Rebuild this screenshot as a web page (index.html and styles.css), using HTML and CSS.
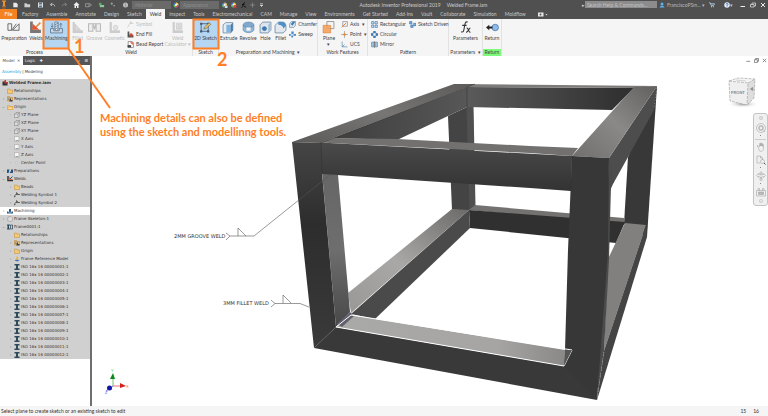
FILE: index.html
```
<!DOCTYPE html>
<html lang="en">
<head>
    <meta charset="UTF-8">
    <meta name="viewport" content="width=device-width, initial-scale=1.0">
    <title>Autodesk Inventor Professional 2019 - Welded Frame.iam</title>
    <link rel="stylesheet" href="styles.css">
</head>
<body>
    <!-- shared icons -->
    <svg class="sprite" aria-hidden="true">
        <symbol id="folder" viewBox="0 0 12 12"><path d="M1 2h4l1 2h5v7H1z" fill="#f3c978" stroke="#c58a2c"/></symbol>
        <symbol id="rep" viewBox="0 0 12 12"><path d="M1 1h4l1 2h5v7H1z" fill="#e9bd6c" stroke="#b07c2c"/><path d="M5 5h3v3h3v3H5z" fill="#444"/><path d="M3 4h3v3H3z" fill="#fff" stroke="#555"/></symbol>
        <symbol id="plane" viewBox="0 0 12 12"><path d="M1 4l3-3h7v7l-3 3H1zM1 4h7v7M8 4l3-3" fill="#ddd" stroke="#777"/></symbol>
        <symbol id="axis" viewBox="0 0 12 12"><path d="M1 1h9v10H1z" fill="#f5f5f5" stroke="#999"/><path d="M3 9h6" stroke="#555"/></symbol>
        <symbol id="beam" viewBox="0 0 12 12"><path d="M1 0h10v3H8v6h3v3H1V9h3V3H1z" fill="#2f4a5c"/></symbol>
        <symbol id="wsym" viewBox="0 0 12 12"><path d="M0 10l3-5h9M5 5V1l4 4M0 10l3-1" fill="none" stroke="#333" stroke-width="1.3"/></symbol>
        <symbol id="prep" viewBox="0 0 12 12"><path d="M0 3h5l-2 7H0zM12 3v7H5l3-4V3z" fill="#23527c"/></symbol>
        <symbol id="weld" viewBox="0 0 12 12"><path d="M2 0v9h10" fill="none" stroke="#333" stroke-width="3"/><path d="M3 8l1-6 7 6z" fill="#e8642c"/><path d="M11 1L6 6" stroke="#235a8c" stroke-width="2"/></symbol>
        <symbol id="mach" viewBox="0 0 12 12"><path d="M0 7h3v2h6V7h3v4H0zM4 2h4v5L6 9 4 7z" fill="#2b5a80"/></symbol>
        <symbol id="wheel" viewBox="0 0 12 12"><circle cx="6" cy="6" r="5" fill="#4b82e0"/><path d="M6 6L6 1a5 5 0 0 1 5 5z" fill="#f2d33d"/><path d="M6 6h5a5 5 0 0 1-5 5z" fill="#e24b4b"/><path d="M6 6v5a5 5 0 0 1-5-5z" fill="#58b957"/><circle cx="6" cy="6" r="2" fill="#fff"/></symbol>
        <symbol id="open" viewBox="0 0 12 12"><path d="M1 3h4l1 2h5v6H1z" fill="#f6d28c" stroke="#d8921e"/><path d="M3 6h9l-2 5H1z" fill="#ffe4a8" stroke="#d8921e"/></symbol>
    </svg>

    <header class="titlebar">
        <nav class="quick">
            <svg class="logo" viewBox="0 0 12 18"><path d="M2 1h8v2L8 4v7l2 1v1H2v-1l2-1V4L2 3z" fill="#f0902c"/><path d="M2 15h8v2H2z" fill="#a8662c"/></svg>
            <svg viewBox="0 0 16 12"><path d="M3 1h7l3 3v7H3z" fill="#e8e8e8"/></svg>
            <svg viewBox="0 0 16 12"><path d="M1 2h5l1 2h7v7H1z" fill="#cfcfcf"/></svg>
            <svg viewBox="0 0 12 12"><path d="M1 1h10v10H1z" fill="#ddd"/><path d="M3 1h6v4H3zM3 7h6v4H3z" fill="#5a7896"/></svg>
            <svg viewBox="0 0 16 12"><path d="M13 9c0-4-4-6-9-4M7 1L3 5l4 3" fill="none" stroke="#c8c8c8" stroke-width="2"/></svg>
            <svg viewBox="0 0 16 12"><path d="M3 9c0-4 4-6 9-4M9 1l4 4-4 3" fill="none" stroke="#888" stroke-width="2"/></svg>
            <svg viewBox="0 0 12 12"><path d="M6 0l6 6h-2v6H7V8H5v4H2V6H0z" fill="#eee"/></svg>
            <svg viewBox="0 0 16 12"><path d="M1 3h8v7H1zM9 2l6 4-6 4" fill="none" stroke="#999" stroke-width="2"/></svg>
            <svg viewBox="0 0 16 12"><path d="M2 1h6v5H2z" fill="#5aa86a"/><path d="M4 6h10v5H4z" fill="#8fc79a"/></svg>
            <svg viewBox="0 0 16 12"><path d="M2 1h4v4H2zM8 6h3v3H8z" fill="#aaa"/></svg>
            <svg viewBox="0 0 12 12"><circle cx="6" cy="6" r="5" fill="#c8c8c8"/><path d="M2 4h8M2 8h8M6 1v10" stroke="#888"/></svg>
        </nav>
        <select class="combo" aria-label="Material"><option>Material</option></select>
        <svg class="mini" viewBox="0 0 12 12"><use href="#wheel"/></svg>
        <select class="combo" aria-label="Appearance"><option>Appearance</option></select>
        <nav class="quick tail">
            <svg viewBox="0 0 12 12"><use href="#wheel"/><path d="M7 7h5v5H7z" fill="#cde"/></svg>
            <svg viewBox="0 0 12 12"><use href="#wheel"/><path d="M6 6l6 6m0-6l-6 6" stroke="#e03c3c" stroke-width="2"/></svg>
            <svg viewBox="0 0 12 12"><path d="M9 1C5 0 6 11 2 11M3 5h5M7 8l4 3" fill="none" stroke="#111" stroke-width="2"/></svg>
            <svg viewBox="0 0 12 12"><path d="M6 1v10M1 6h10" stroke="#aaa"/></svg>
            <svg viewBox="0 0 12 12"><path d="M3 3h6M3 6h6L6 9z" fill="#ddd" stroke="#ddd"/></svg>
        </nav>
        <div class="title"><span>Autodesk Inventor Professional 2019</span><span>Welded Frame.iam</span></div>
        <div class="account">
            <span class="arrow">▸</span>
            <input class="search" type="text" placeholder="Search Help &amp; Commands..." aria-label="Search Help and Commands">
            <svg class="mini" viewBox="0 0 12 12"><circle cx="6" cy="4" r="3" fill="#5db0f0"/><path d="M1 11c1-5 9-5 10 0z" fill="#5db0f0"/></svg>
            <span class="user">FranciscoPSm... ▾</span>
            <svg class="mini cart" viewBox="0 0 14 12"><path d="M0 1h3l2 6h6l2-4H4" fill="none" stroke="#e8e8e8" stroke-width="1.5"/><path d="M5 3h7l-1 3H6z" fill="#4a90d0"/><path d="M5 9h2v2H5zM9 9h2v2H9z" fill="#eee"/></svg>
            <svg class="mini" viewBox="0 0 12 12"><circle cx="6" cy="6" r="5.5" fill="#e8eef8"/><path d="M4 5c0-3 4-3 4 0 0 1-2 1-2 3M6 9v1" fill="none" stroke="#24549c" stroke-width="1.5"/></svg>
            <span class="arrow">▾</span>
        </div>
        <div class="winbtns">
            <button aria-label="Minimize"><svg viewBox="0 0 12 12"><path d="M1 9h9" stroke="#eee" stroke-width="2"/></svg></button>
            <button aria-label="Restore"><svg viewBox="0 0 12 12"><path d="M1 5h7v5H1zM4 5V2h7v6H8" fill="none" stroke="#ddd" stroke-width="1.5"/></svg></button>
            <button aria-label="Close"><svg viewBox="0 0 12 12"><path d="M2 2l8 8m0-8l-8 8" stroke="#eee" stroke-width="2"/></svg></button>
        </div>
    </header>

    <nav class="tabs">
        <button class="file">File</button>
        <button>Factory</button>
        <button>Assemble</button>
        <button>Annotate</button>
        <button>Design</button>
        <button>Sketch</button>
        <button class="active">Weld</button>
        <button>Inspect</button>
        <button>Tools</button>
        <button>Electromechanical</button>
        <button>CAM</button>
        <button>Manage</button>
        <button>View</button>
        <button>Environments</button>
        <button>Get Started</button>
        <button>Add-Ins</button>
        <button>Vault</button>
        <button>Collaborate</button>
        <button>Simulation</button>
        <button>Moldflow</button>
        <button class="display" aria-label="Ribbon display"><svg viewBox="0 0 20 10"><path d="M0 1h11v8H0z" fill="#e8e8e8"/><circle cx="5" cy="5" r="2" fill="#555"/><path d="M15 4h4l-2 3z" fill="#ddd"/></svg></button>
    </nav>

    <section class="ribbon">
        <div class="group process">
            <div class="items">
                <button class="tool"><svg viewBox="0 0 28 24"><path d="M2 4h8v14H2zM26 4v14H12z M10 18l10-14" fill="#f2f2f2" stroke="#666" stroke-width="2"/></svg>Preparation</button>
                <button class="tool"><svg viewBox="0 0 24 24"><path d="M2 1h5v15h15v6H2z" fill="#777"/><path d="M6 16L7 5l12 11z" fill="#e8542c"/><path d="M21 3l-8 8" stroke="#d69044" stroke-width="3"/></svg>Welds</button>
                <button class="tool on"><svg viewBox="0 0 24 24"><path d="M1 14h6v4h10v-4h6v8H1z" fill="#cdd8e2" stroke="#59728a" stroke-width="1.5"/><path d="M9 2h6v13l-3 3-3-3zM9 7l6-3M9 11l6-3M9 15l6-3M4 4v7m-2-2l2 3 2-3M20 12V5m-2 2l2-3 2 3" fill="#eef3f7" stroke="#59728a" stroke-width="1.5"/></svg>Machining</button>
            </div>
            <div class="label">Process</div>
        </div>
        <div class="group weldgrp">
            <div class="items">
                <button class="tool" disabled><svg viewBox="0 0 24 24"><path d="M3 2h4v15h15v5H3z" fill="#ccc"/><path d="M8 6l9 10H8z" fill="#ddd" stroke="#bbb"/></svg>Fillet</button>
                <button class="tool" disabled><svg viewBox="0 0 24 24"><path d="M1 5h8v14H1zM15 5h8v14h-8zM9 5h6l-3 9z" fill="#eee" stroke="#bbb" stroke-width="2"/></svg>Groove</button>
                <button class="tool" disabled><svg viewBox="0 0 24 24"><path d="M3 2h4v15h15v5H3z" fill="#ccc"/><circle cx="14" cy="12" r="4" fill="#e5e5e5" stroke="#bbb"/></svg>Cosmetic</button>
                <div class="stack">
                    <button disabled><svg viewBox="0 0 12 12"><path d="M1 11l4-7h6M6 4V1l3 3" fill="none" stroke="#bbb"/></svg>Symbol</button>
                    <button><svg viewBox="0 0 12 12"><path d="M1 1h3v6h7v4H1z" fill="#555"/><circle cx="7" cy="7" r="3" fill="#c44a3c"/></svg>End Fill</button>
                    <button><svg viewBox="0 0 12 12"><path d="M2 1h7l2 2v8H2z" fill="#fff" stroke="#555"/><path d="M1 7h6v4H1z" fill="#444"/><path d="M5 2h5v5z" fill="#e0523c"/></svg>Bead Report</button>
                </div>
                <button class="tool" disabled><svg viewBox="0 0 24 24"><path d="M3 2h4v15h15v5H3z" fill="#ccc"/><path d="M10 4h10v11H10zM12 7h6M12 10h6M12 13h6" fill="#e5e5e5" stroke="#bbb"/></svg>Weld<br>Calculator ▾</button>
            </div>
            <div class="label">Weld</div>
        </div>
        <div class="group sketchgrp">
            <div class="items">
                <button class="tool on"><svg viewBox="0 0 24 24"><path d="M4 5h13v14H4z" fill="none" stroke="#41586c" stroke-width="1.5"/><path d="M2 3h4v4H2zM15 3h4v4h-4zM2 17h4v4H2zM15 17h4v4h-4z" fill="#41586c"/><path d="M9 15l1-4 9-8 3 3-9 8z" fill="#f0c060" stroke="#555"/></svg>2D Sketch</button>
            </div>
            <div class="label">Sketch</div>
        </div>
        <div class="group prepgrp">
            <div class="items">
                <button class="tool"><svg viewBox="0 0 24 24"><path d="M2 7l5-4h13v14l-4 5H2z" fill="#e8edf2" stroke="#6a88a4" stroke-width="1.5"/><path d="M8 7h8v14H8z" fill="#7fb4e2"/><path d="M16 7l4-4v14l-4 5z" fill="#4c7da8"/></svg>Extrude</button>
                <button class="tool"><svg viewBox="0 0 24 24"><ellipse cx="12" cy="7" rx="10" ry="5" fill="#7fa9cf" stroke="#55799a"/><path d="M2 8v9c4 6 16 6 20 0V8l-6 4v5H8v-5z" fill="#8eb9df" stroke="#55799a"/><path d="M8 12h8v6H8z" fill="#f5f5f5"/></svg>Revolve</button>
                <button class="tool"><svg viewBox="0 0 24 24"><path d="M2 7l5-5h15v15l-5 5H2z" fill="#dde5ec" stroke="#6a88a4" stroke-width="1.5"/><path d="M17 7l5-5v15l-5 5z" fill="#a9bfd2"/><circle cx="10" cy="14" r="5" fill="#3e78b0" stroke="#fff"/></svg>Hole</button>
                <button class="tool"><svg viewBox="0 0 24 24"><path d="M2 22V8l6-6h7c5 0 7 4 7 7v8l-5 5z" fill="#e2e8ee" stroke="#6a88a4" stroke-width="1.5"/><path d="M8 2h7c5 0 7 4 7 7l-5 5c0-5-4-7-9-7z" fill="#4f8fc8"/></svg>Fillet</button>
                <div class="stack">
                    <button><svg viewBox="0 0 12 12"><path d="M1 5l3-4h7v7l-3 3H1z" fill="#dfe7ee" stroke="#55799a"/><path d="M3 5l4-4h4L6 8z" fill="#3d7db8"/></svg>Chamfer</button>
                    <button><svg viewBox="0 0 12 12"><path d="M4 1h4v4h4v3H7v3H4V8H0V5h4z" fill="#4a88c0"/><path d="M3 5h5v3H3z" fill="#cfe0ee"/></svg>Sweep</button>
                </div>
            </div>
            <div class="label">Preparation and Machining &nbsp;▾</div>
        </div>
        <div class="group workgrp">
            <div class="items">
                <button class="tool"><svg viewBox="0 0 24 24"><path d="M9 1h13v13H9z" fill="#f5f5f5" stroke="#8a8a8a" stroke-width="1.5"/><path d="M2 8h14v14H2z" fill="#f3a25c" fill-opacity=".9" stroke="#d87a2c"/></svg>Plane<i>▾</i></button>
                <div class="stack">
                    <button><svg viewBox="0 0 12 12"><path d="M3 1h8v8H3z" fill="none" stroke="#777"/><path d="M1 11L9 3" stroke="#e07a2c" stroke-width="1.5"/></svg>Axis &nbsp;▾</button>
                    <button><svg viewBox="0 0 12 12"><path d="M6 0v12M0 6h12" stroke="#888"/><path d="M6 3l3 3-3 3-3-3z" fill="#e88a3c"/></svg>Point &nbsp;▾</button>
                    <button><svg viewBox="0 0 12 12"><path d="M2 1v9h9M2 10l4-4" fill="none" stroke="#3a6ea0"/></svg>UCS</button>
                </div>
            </div>
            <div class="label">Work Features</div>
        </div>
        <div class="group patterngrp">
            <div class="items">
                <div class="stack">
                    <button><svg viewBox="0 0 12 12"><path d="M1 1h4v4H1zM7 1h4v4H7zM1 7h4v4H1zM7 7h4v4H7z" fill="#cfe0f0" stroke="#2f6aa5"/></svg>Rectangular</button>
                    <button><svg viewBox="0 0 12 12"><circle cx="6" cy="6" r="4" fill="none" stroke="#888"/><path d="M4 0h4v4H4zM4 8h4v4H4zM0 4h4v4H0zM8 4h4v4H8z" fill="#3c78b4"/></svg>Circular</button>
                    <button><svg viewBox="0 0 12 12"><path d="M1 2h4v8H1zM7 2h4v8H7z" fill="#a9c8e4" stroke="#41769f"/><path d="M6 0v12" stroke="#555"/></svg>Mirror</button>
                </div>
                <div class="stack">
                    <button><svg viewBox="0 0 12 12"><path d="M1 1h4v4H1zM3 7h4v4H3zM8 4h4v4H8z" fill="#7fb0de" stroke="#2f6aa5"/></svg>Sketch Driven</button>
                </div>
            </div>
            <div class="label">Pattern</div>
        </div>
        <div class="group paramgrp">
            <div class="items">
                <button class="tool"><svg viewBox="0 0 24 24"><path d="M16 2c-5-2-5 4-6 9s-1 11-6 9M6 8h8M14 13c4-1 3 8 7 8M21 13c-3 0-4 8-8 8" fill="none" stroke="#333" stroke-width="2"/></svg>Parameters</button>
            </div>
            <div class="label">Parameters &nbsp;▾</div>
        </div>
        <div class="group returngrp">
            <div class="items">
                <button class="tool"><svg viewBox="0 0 24 24"><circle cx="17" cy="12" r="6" fill="#8fbbe6" stroke="#4c7db0" stroke-width="1.5"/><path d="M0 12l6-5v3h6v4H6v3z" fill="#222"/></svg>Return</button>
            </div>
            <div class="label">Return</div>
        </div>
    </section>

    <main>
        <aside class="browser">
            <div class="panel-tabs">
                <button class="current">Model &nbsp;✕</button>
                <button>Logic</button>
                <button aria-label="Add panel">✚</button>
                <button class="menu" aria-label="Search">⌕</button>
                <button aria-label="Menu">☰</button>
            </div>
            <div class="modes"><a href="#">Assembly</a><a href="#">Modeling</a></div>
            <ul class="tree">
                <li class="root"><svg viewBox="0 0 12 12"><path d="M1 3h5v3h5v5H1z" fill="#333"/><path d="M5 0h3v4h4v3H5z" fill="#c8342c"/></svg><b>Welded Frame.iam</b></li>
                <li class="l1"><i></i><svg><use href="#folder"/></svg>Relationships</li>
                <li class="l1"><i>›</i><svg><use href="#rep"/></svg>Representations</li>
                <li class="l1"><i>⌄</i><svg><use href="#open"/></svg>Origin</li>
                <li class="l2"><i>-</i><svg><use href="#plane"/></svg>YZ Plane</li>
                <li class="l2"><i>-</i><svg><use href="#plane"/></svg>XZ Plane</li>
                <li class="l2"><i>-</i><svg><use href="#plane"/></svg>XY Plane</li>
                <li class="l2"><i>-</i><svg><use href="#axis"/></svg>X Axis</li>
                <li class="l2"><i>-</i><svg><use href="#axis"/></svg>Y Axis</li>
                <li class="l2"><i>-</i><svg><use href="#axis"/></svg>Z Axis</li>
                <li class="l2"><i>-</i><svg viewBox="0 0 12 12"><circle cx="5" cy="6" r="2" fill="#eee" stroke="#aaa"/></svg>Center Point</li>
                <li class="l1"><i>›</i><svg><use href="#prep"/></svg>Preparations</li>
                <li class="l1"><i>⌄</i><svg><use href="#weld"/></svg>Welds</li>
                <li class="l2"><i>›</i><svg><use href="#folder"/></svg>Beads</li>
                <li class="l2"><i>›</i><svg><use href="#wsym"/></svg>Welding Symbol 1</li>
                <li class="l2"><i>›</i><svg><use href="#wsym"/></svg>Welding Symbol 2</li>
                <li class="l1 selected"><i>›</i><svg><use href="#mach"/></svg>Machining</li>
                <li class="l1"><i>›</i><svg viewBox="0 0 12 12"><path d="M2 2l6-1 3 3v5l-4 2-6-2z" fill="#ddd" stroke="#888"/></svg>Frame Skeleton:1</li>
                <li class="l1"><i>⌄</i><svg viewBox="0 0 12 12"><path d="M0 1h6v2H4v6h2v2H0V9h1V3H0z" fill="#2f4a5c"/><path d="M7 2h4v8H7z" fill="none" stroke="#2f4a5c" stroke-width="1.5"/></svg>Frame0001:1</li>
                <li class="l2"><i></i><svg><use href="#folder"/></svg>Relationships</li>
                <li class="l2"><i>›</i><svg><use href="#rep"/></svg>Representations</li>
                <li class="l2"><i>›</i><svg><use href="#folder"/></svg>Origin</li>
                <li class="l2"><i>›</i><svg viewBox="0 0 12 12"><path d="M1 9l4-2 6 1-4 3z" fill="#3c78b4"/><path d="M2 8l3-3V1l4 1-2 5z" fill="#e8b02c"/></svg>Frame Reference Model</li>
                <li class="l2"><i>›</i><svg><use href="#beam"/></svg>ISO 16x 16 00000001:1</li>
                <li class="l2"><i>›</i><svg><use href="#beam"/></svg>ISO 16x 16 00000002:1</li>
                <li class="l2"><i>›</i><svg><use href="#beam"/></svg>ISO 16x 16 00000003:1</li>
                <li class="l2"><i>›</i><svg><use href="#beam"/></svg>ISO 16x 16 00000004:1</li>
                <li class="l2"><i>›</i><svg><use href="#beam"/></svg>ISO 16x 16 00000005:1</li>
                <li class="l2"><i>›</i><svg><use href="#beam"/></svg>ISO 16x 16 00000006:1</li>
                <li class="l2"><i>›</i><svg><use href="#beam"/></svg>ISO 16x 16 00000007:1</li>
                <li class="l2"><i>›</i><svg><use href="#beam"/></svg>ISO 16x 16 00000008:1</li>
                <li class="l2"><i>›</i><svg><use href="#beam"/></svg>ISO 16x 16 00000009:1</li>
                <li class="l2"><i>›</i><svg><use href="#beam"/></svg>ISO 16x 16 00000010:1</li>
                <li class="l2"><i>›</i><svg><use href="#beam"/></svg>ISO 16x 16 00000011:1</li>
                <li class="l2"><i>›</i><svg><use href="#beam"/></svg>ISO 16x 16 00000012:1</li>
            </ul>
        </aside>

        <section class="viewport">
            <svg class="scene" viewBox="92 56 676 350" preserveAspectRatio="xMinYMin meet">
                <defs>
                    <linearGradient id="front" x1="0" y1="0" x2="0" y2="1"><stop offset="0" stop-color="#4a4a4a"/><stop offset="1" stop-color="#333"/></linearGradient>
                    <linearGradient id="post" x1="0" y1="0" x2="0" y2="1"><stop offset="0" stop-color="#454545"/><stop offset=".4" stop-color="#2d2d2d"/><stop offset="1" stop-color="#3a3a3a"/></linearGradient>
                    <linearGradient id="side" x1="0" y1="0" x2="0" y2="1"><stop offset="0" stop-color="#666"/><stop offset=".5" stop-color="#6e6e6e"/><stop offset="1" stop-color="#484848"/></linearGradient>
                    <linearGradient id="topface" x1="0" y1="1" x2="1" y2="0"><stop offset="0" stop-color="#5c5b5a"/><stop offset=".5" stop-color="#787674"/><stop offset="1" stop-color="#5c5b5a"/></linearGradient>
                    <linearGradient id="righttop" x1="0" y1="1" x2="1" y2="0"><stop offset="0" stop-color="#716f6e"/><stop offset=".5" stop-color="#8b8988"/><stop offset="1" stop-color="#62605f"/></linearGradient>
                    <linearGradient id="inner" x1="0" y1="0" x2="1" y2="0"><stop offset="0" stop-color="#3e3e3e"/><stop offset="1" stop-color="#575757"/></linearGradient>
                    <linearGradient id="back" x1="0" y1="0" x2="1" y2="0"><stop offset="0" stop-color="#5a5a5a"/><stop offset="1" stop-color="#2e2e2e"/></linearGradient>
                    <linearGradient id="floor" x1="0" y1="1" x2="1" y2="0"><stop offset="0" stop-color="#9a9897"/><stop offset=".45" stop-color="#a9a8a7"/><stop offset="1" stop-color="#6c6a69"/></linearGradient>
                    <linearGradient id="sill" x1="0" y1="0" x2="1" y2="0"><stop offset="0" stop-color="#a9a9a8"/><stop offset=".7" stop-color="#a6a5a4"/><stop offset="1" stop-color="#8a8988"/></linearGradient>
                    <radialGradient id="shadow"><stop offset="0" stop-color="#999"/><stop offset="1" stop-color="#fff" stop-opacity="0"/></radialGradient>
                </defs>
                <!-- back posts and rails -->
                <path d="M448 116l19-9h6l2 99-6 4h-17z" fill="#444"/>
                <path d="M466.500 107h7l2 99-6 4z" fill="#505050"/>
                <path d="M467 87l167 1-22 22-145-3z" fill="url(#back)"/>
                <path d="M454 84l203 2-23 2-167-1z" fill="#7d7b7a"/>
                <path d="M475 205l149 13v7l-155-15z" fill="#747271"/>
                <path d="M469 210l156 12-9 21-146-15z" fill="#303030"/>
                <path d="M628 157l29-71-10 151-23-13z" fill="#383838"/>
                <!-- bottom side rails -->
                <path d="M452 209l17 1-118 103-3-20z" fill="url(#floor)"/>
                <path d="M469 210l1 18-95 91-24-5z" fill="#4a4a4a"/>
                <path d="M625 223l21 2-42 126 4-92z" fill="#81807e"/>
                <path d="M646 225l1 12-50 163 7-49z" fill="#444"/>
                <!-- top rails -->
                <path d="M333 138l134-51v20l-19 9-51 24z" fill="url(#inner)"/>
                <path d="M292 142l162-58h21l-8 3-134 51-12 5z" fill="url(#topface)"/>
                <path d="M320 142.500l13-4.500 64 1 133 7 48 2-6 8-42-3z" fill="#73716f"/>
                <path d="M609 158l48-72-3 24-26 47-15 27-4 9z" fill="#4d4d4d"/>
                <path d="M572 156l62-69 23-1-48 72z" fill="url(#righttop)"/>
                <path d="M657 88l-3 20" stroke="#aaa" stroke-dasharray="1 2" stroke-width=".6"/>
                <!-- front frame -->
                <path d="M322 172l16 3 12 137-14 15z" fill="url(#side)"/>
                <path d="M320 142.500l252 13.500-1 35-41-3-208-14z" fill="url(#front)"/>
                <path d="M292 142l30 1v30l14 154-22 21z" fill="url(#post)"/>
                <path d="M609 158l5 24-3 3-2 75-5 91-7 49z" fill="#4b4b4b"/>
                <path d="M314 348l22-21 229 39 7-16 25 50z" fill="#393939"/>
                <path d="M572 156l37 2-1 92-11 150-33-34 1-16 3-100z" fill="#373737"/>
                <path d="M336 327l15-12 214 35-1 16z" fill="url(#sill)"/>
                <path d="M337 324l13-12 4 4-12 11z" fill="#62606c"/>
                <path d="M336 327l15-12 221 35-8 16z" fill="none" stroke="#fff"/>
                <path d="M565 350l-1 16 8-16z" fill="#555"/>
                <path d="M604 352l-7 45" stroke="#aaa" stroke-dasharray="1 2" stroke-width=".6"/>
                <path d="M321 143l1 29M572 156l-1 35M467 87v20M321 143l146-56 8-3" fill="none" stroke="#333" stroke-width=".5"/>

                <!-- weld symbols -->
                <g fill="none" stroke="#555" stroke-width=".6">
                    <path d="M226 233l4 3-4 4M230 236h24l76-61M238 236v-8l8 8"/>
                    <path d="M271 300l4 3.500-4 3.500M275 303.500h25l9 3.500M283 303v-8l8 8"/>
                </g>
                <text class="weld-note" x="174" y="238">2MM GROOVE WELD</text>
                <text class="weld-note" x="223" y="305">3MM FILLET WELD</text>

                <!-- axis triad -->
                <g stroke-width=".7">
                    <path d="M113 386v-8" stroke="#3a3"/><path d="M113 373l2 6h-5z" fill="#0a8a1a"/>
                    <path d="M113 386h8" stroke="#d33"/><path d="M126 386l-6 2v-5z" fill="#d02020"/>
                    <path d="M113 386l-7 5" stroke="#33c"/><circle cx="109.500" cy="388" r="2.500" fill="#1414a8"/>
                </g>
                <g class="triad"><text x="111" y="372" fill="#2fd22f">Y</text><text x="126" y="388" fill="#ff4a3c">X</text><text x="105" y="394" fill="#3c3cff">Z</text></g>
            </svg>

            <div class="doc-buttons">
                <button aria-label="Minimize document"><svg viewBox="0 0 12 12"><path d="M1 8h9" stroke="#777" stroke-width="2"/></svg></button>
                <button aria-label="Restore document"><svg viewBox="0 0 12 12"><path d="M1 4h7v7H1zM4 4V1h7v7H8" fill="none" stroke="#777" stroke-width="2"/></svg></button>
                <button aria-label="Close document"><svg viewBox="0 0 12 12"><path d="M2 2l8 8m0-8l-8 8" stroke="#777" stroke-width="2"/></svg></button>
            </div>
            <svg class="cube" viewBox="0 0 34 32">
                <ellipse cx="17" cy="27" rx="16" ry="4" fill="url(#shadow)"/>
                <path d="M3 4l9-3 17 1-7 4z" fill="#f6f6f6"/><path d="M3 4l19 2-1 22-17-4z" fill="#efefef"/><path d="M22 6l7-4-1 19-7 7z" fill="#dedede"/>
                <path d="M3 4l9-3 17 1-1 19-7 7-17-4zM3 4l19 2-1 22M22 6l7-4" fill="none" stroke="#999" stroke-width=".6" stroke-dasharray="3 1"/>
                <path d="M10 3l10 1M24 12l3-2v4z" fill="#888" stroke="#aaa" stroke-width=".5"/>
                <text x="5" y="17">FRONT</text>
            </svg>
            <nav class="navbar">
                <svg class="tiny" viewBox="0 0 12 12"><circle cx="6" cy="6" r="5"/><path d="M4 4l4 4m0-4l-4 4"/></svg>
                <button aria-label="Wheel"><svg viewBox="0 0 20 20"><circle cx="10" cy="10" r="9"/><circle cx="10" cy="10" r="5"/><path d="M7 7h6v6H7zM15 15l3 3"/></svg></button>
                <i></i>
                <hr>
                <button aria-label="Pan"><svg viewBox="0 0 20 20"><path d="M5 11L2 8l2-1 3 3V4c0-2 2-2 2 0v4-5c0-2 2-2 2 0v5-4c0-2 2-2 2 0v5-3c0-2 2-2 2 0v7c0 7-8 7-9 3z"/></svg></button>
                <button aria-label="Zoom"><svg viewBox="0 0 20 20"><path d="M2 2h7l4 4v4M2 2v14h7M9 2v4h4"/><circle cx="13" cy="13" r="4"/><path d="M16 16l3 3" stroke="#555" stroke-width="2"/></svg></button>
                <i></i>
                <button aria-label="Orbit"><svg viewBox="0 0 20 20"><path d="M10 1l3 4h-2v3l4-1V5l4 4-4 4v-2l-4 1v4h2l-3 4-3-4h2v-4l-4-1v2L1 9l4-4v2l4 1V5H7z"/></svg></button>
                <i></i>
                <button aria-label="Look at"><svg viewBox="0 0 20 20"><path d="M1 7h18v11H1zM4 7V3h3v4M13 7V3h3v4"/><path d="M5 10h10v5H5z" fill="#bbb"/></svg></button>
                <svg class="tiny" viewBox="0 0 12 12"><circle cx="6" cy="6" r="5"/><path d="M4 5l2 3 2-3"/></svg>
            </nav>
        </section>
    </main>

    <footer class="status">
        <span class="prompt">Select plane to create sketch or an existing sketch to edit</span>
        <span>15</span>
        <span>16</span>
    </footer>

    <!-- tutorial callouts drawn over the window -->
    <svg class="callouts" width="300" height="150">
        <path d="M43.500 19.500h25v29h-25zM193.500 19.500h25v29h-25z"/>
        <path d="M68 48l42 60"/>
        <text class="step" x="74" y="53">1</text>
        <text class="step" x="217" y="66">2</text>
        <text class="note" x="100" y="122">Machining details can also be defined</text>
        <text class="note" x="100" y="136">using the sketch and modellinng tools.</text>
    </svg>
</body>
</html>
```
FILE: styles.css
```
:root {
    --chrome: #505050;
    --ribbon: #f5f5f5;
    --accent: #ff7f27;
    --text: #444;
}

* {
    box-sizing: border-box;
    margin: 0;
    padding: 0;
}

body {
    display: flex;
    flex-direction: column;
    min-height: 100vh;
    position: relative;
    font-family: Lato, "Liberation Sans", sans-serif;
    font-size: 5px;
    line-height: 6px;
    color: var(--text);
    background: #fff;
}

button,
input,
select {
    font: inherit;
    color: inherit;
    background: none;
    border: 0;
}

.sprite {
    position: absolute;
    width: 0;
    height: 0;
}

/* Title bar */
.titlebar {
    display: flex;
    align-items: center;
    height: 9px;
    background: var(--chrome);
    color: #ccc;
}

.quick {
    display: flex;
    align-items: center;
    justify-content: space-between;
    width: 129px;
    padding-left: 1px;
}

.quick svg {
    width: 7px;
    height: 6px;
}

.quick .logo {
    width: 6px;
    height: 9px;
}

.quick.tail {
    width: 46px;
    padding-left: 2px;
}

.combo {
    appearance: none;
    width: 39px;
    height: 8px;
    margin-left: 3px;
    padding-left: 3px;
    background: #6a6a6a;
    color: #8c8c8c;
    font-style: italic;
}

.mini {
    width: 6px;
    height: 6px;
    margin-left: 2px;
    flex: none;
}

.mini + .combo {
    margin-left: 1px;
}

.title {
    display: flex;
    flex: 1;
    gap: 6px;
    justify-content: center;
    white-space: nowrap;
}

.account {
    display: flex;
    align-items: center;
}

.search {
    width: 72px;
    height: 7px;
    padding-left: 2px;
    background: #8c8c8c;
    color: #ddd;
}

.search::placeholder {
    color: #c4c4c4;
}

.user {
    margin-left: 2px;
    color: #b8b8b8;
    white-space: nowrap;
}

.cart {
    margin: 0 7px 0 4px;
}

.winbtns {
    display: flex;
    gap: 4px;
    margin-left: 7px;
    padding-right: 2px;
}

.winbtns button,
.winbtns svg {
    display: block;
    width: 6px;
    height: 6px;
}

/* Ribbon tabs */
.tabs {
    display: flex;
    height: 10px;
    background: var(--chrome);
    color: #c8c8c8;
}

.tabs button {
    padding: 0 4px;
    line-height: 10px;
    white-space: nowrap;
}

.tabs .file {
    width: 17px;
    margin-right: 1px;
    background: #f58220;
    color: #fff;
}

.tabs .active {
    background: var(--ribbon);
    color: #333;
}

.tabs .display {
    padding-left: 8px;
}

.tabs svg {
    display: block;
    width: 10px;
    height: 5px;
}

/* Ribbon */
.ribbon {
    display: flex;
    height: 37px;
    background: var(--ribbon);
}

.group {
    display: flex;
    flex-direction: column;
    border-right: 1px solid #e2e2e2;
}

.items {
    display: flex;
    height: 30px;
}

.label {
    line-height: 7px;
    text-align: center;
    white-space: nowrap;
}

.tool {
    display: flex;
    flex-direction: column;
    align-items: center;
    flex: 1 1 auto;
    padding-top: 2px;
    white-space: nowrap;
}

.tool svg {
    width: 13px;
    height: 13px;
    margin-bottom: 1px;
}

.tool i {
    font-style: normal;
    line-height: 6px;
}

.tool.on {
    flex: none;
    width: 25px;
    background: #b5d6f3;
}

button:disabled {
    color: #bbb;
}

.stack {
    display: flex;
    flex-direction: column;
    padding-left: 1px;
}

.stack button {
    display: flex;
    align-items: center;
    gap: 2px;
    height: 10px;
    white-space: nowrap;
}

.stack svg {
    width: 7px;
    height: 7px;
}

.process { width: 70px; }
.weldgrp { width: 123px; }
.sketchgrp { width: 26px; }
.prepgrp { width: 99px; }
.workgrp { width: 50px; }
.patterngrp { width: 81px; }
.paramgrp { width: 34px; }
.returngrp { width: 19px; }

.patterngrp .stack {
    padding-left: 3px;
}

.returngrp .label {
    background: #7dfa7d;
}

/* Model browser */
main {
    display: flex;
    flex: 1;
}

.browser {
    width: 92px;
    flex: none;
    border-right: 2px solid #6e6e6e;
    font-family: "DejaVu Sans", sans-serif;
    font-size: 4px;
    color: #333;
}

.panel-tabs {
    display: flex;
    height: 9px;
    background: #555;
    color: #eee;
}

.panel-tabs button {
    padding: 0 2px;
    white-space: nowrap;
}

.panel-tabs .current {
    width: 23px;
    background: #fff;
    color: #555;
}

.panel-tabs .menu {
    margin-left: auto;
}

.modes {
    display: flex;
    height: 14px;
    padding-left: 2px;
    line-height: 14px;
}

.modes a {
    color: #444;
    text-decoration: none;
}

.modes a:first-child {
    color: #2b9cd8;
}

.modes a:first-child::after {
    content: "|";
    padding: 0 1px;
    color: #444;
}

.tree {
    list-style: none;
    background: #d0d0d0;
}

.tree li {
    display: flex;
    align-items: center;
    gap: 1px;
    height: 8px;
    white-space: nowrap;
}

.tree svg {
    width: 6px;
    height: 6px;
    flex: none;
}

.tree i {
    width: 5px;
    color: #777;
    font-style: normal;
    text-align: center;
}

.tree .root {
    padding-left: 2px;
}

.tree .l1 {
    padding-left: 1px;
}

.tree .l2 {
    padding-left: 8px;
}

.tree .selected {
    background: #fff;
}

/* Viewport */
.viewport {
    position: relative;
    flex: 1;
    min-width: 0;
}

.scene {
    display: block;
    width: 100%;
}

.weld-note {
    font: 5px "DejaVu Sans", sans-serif;
    fill: #333;
}

.triad {
    font: 4px "Liberation Sans", sans-serif;
}

.doc-buttons {
    position: absolute;
    top: 2px;
    right: 1px;
    display: flex;
    gap: 3px;
}

.doc-buttons button,
.doc-buttons svg {
    display: block;
    width: 5px;
    height: 5px;
}

.cube {
    position: absolute;
    top: 21px;
    right: 8px;
    width: 34px;
    height: 32px;
}

.cube text {
    font: bold 4px "Liberation Sans", sans-serif;
    fill: #8a8a8a;
}

.navbar {
    position: absolute;
    top: 57px;
    right: 0;
    display: flex;
    flex-direction: column;
    align-items: center;
    justify-content: space-between;
    width: 15px;
    height: 93px;
    padding: 2px 0;
    border: 1px solid #c4c4c4;
    border-radius: 3px;
    background: #f0f0f0;
}

.navbar svg {
    display: block;
    width: 10px;
    height: 10px;
    fill: none;
    stroke: #999;
}

.navbar .tiny {
    width: 4px;
    height: 4px;
}

.navbar i {
    width: 1px;
    height: 1px;
    background: #888;
}

.navbar hr {
    width: 11px;
    border: 0;
    border-top: 1px solid #ccc;
}

/* Status bar */
.status {
    display: flex;
    gap: 7px;
    height: 10px;
    padding: 0 9px 0 1px;
    line-height: 10px;
    background: #f5f5f5;
    color: #333;
}

.prompt {
    flex: 1;
}

/* Callouts */
.callouts {
    position: absolute;
    top: 0;
    left: 0;
    pointer-events: none;
}

.callouts path {
    fill: none;
    stroke: var(--accent);
    stroke-width: 2;
}

.callouts text {
    font-family: Lato, "Open Sans", sans-serif;
    font-weight: bold;
    fill: var(--accent);
}

.step {
    font-size: 18px;
}

.note {
    font-size: 11px;
}
```
